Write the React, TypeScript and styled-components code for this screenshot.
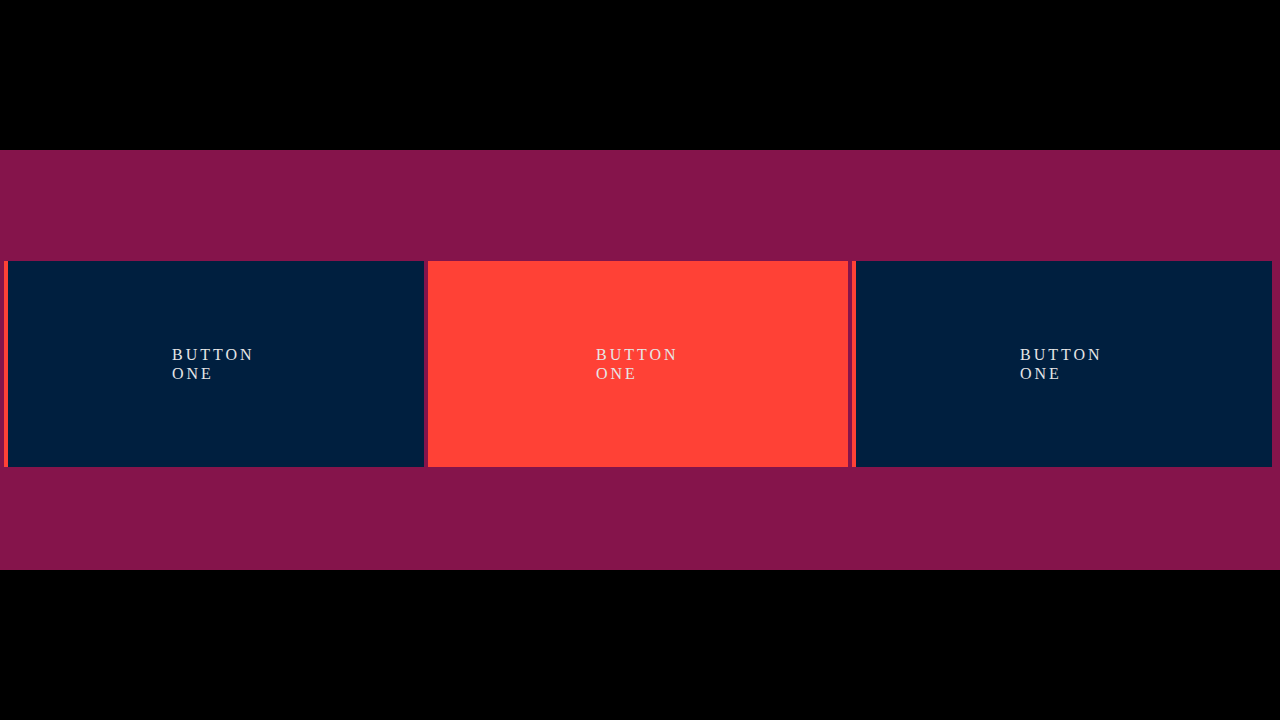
import React from "react";
import styled, {createGlobalStyle} from "styled-components";

const GlobalStyle = createGlobalStyle`
    html, body {
        margin: 0;
        padding: 0;
        background: #000;
    }
    body {
        width: 1280px;
        height: 720px;
        overflow: hidden;
    }
`

type ButtonProps = {
    label: string
    active?: boolean
}

const NavButton = (props: ButtonProps) => {
    const {label, active} = props
    return (
        <StyledButton $active={active}>
            <Label>{label}</Label>
        </StyledButton>
    )
}

export default function App() {
    return (
        <>
            <GlobalStyle/>
            <Band>
                <Row>
                    <NavButton label="Button One"/>
                    <NavButton label="Button One" active/>
                    <NavButton label="Button One"/>
                </Row>
            </Band>
        </>
    )
}

const Band = styled.section`
    margin-top: 150px;
    height: 420px;
    background-color: #85144b;
    padding: 111px 0 0 4px;
    box-sizing: border-box;
`
const Row = styled.div`
    display: flex;
    gap: 4px;
`
const StyledButton = styled.button<{ $active?: boolean }>`
    width: 420px;
    height: 206px;
    padding: 0 0 0 4px;
    margin: 0;
    border: none;
    border-left: 4px solid #ff4136;
    background-color: ${props => props.$active ? "#ff4136" : "#001f3f"};
    display: flex;
    align-items: center;
    justify-content: center;
    cursor: pointer;
    box-sizing: border-box;
`
const Label = styled.span`
    display: inline-block;
    max-width: 92px;
    text-align: left;
    font-family: "Liberation Serif", "Times New Roman", serif;
    font-size: 16px;
    line-height: 19px;
    letter-spacing: 3px;
    text-transform: uppercase;
    color: #e6e6e6;
`
